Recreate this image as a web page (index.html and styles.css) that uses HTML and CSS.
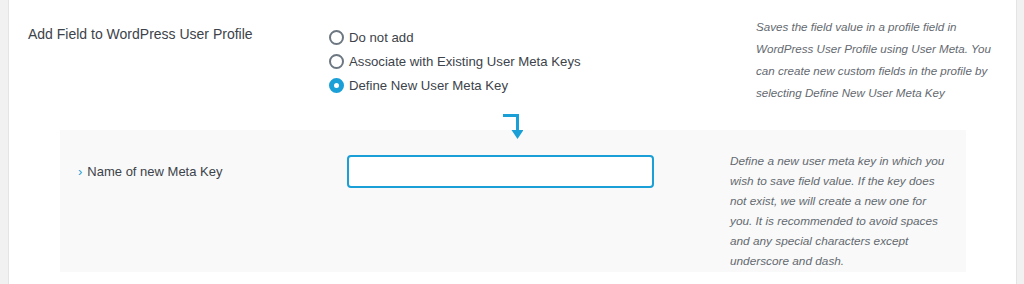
FILE: index.html
```html
<!DOCTYPE html>
<html lang="en">
<head>
  <meta charset="UTF-8">
  <title>User Profile Field</title>
  <link rel="stylesheet" href="styles.css">
</head>
<body>
  <div class="wrap">
    <div class="row">
      <div class="label">Add Field to WordPress User Profile</div>
      <div class="choices">
        <label class="radio"><span class="dot"></span>Do not add</label>
        <label class="radio"><span class="dot"></span>Associate with Existing User Meta Keys</label>
        <label class="radio"><span class="dot checked"></span>Define New User Meta Key</label>
      </div>
      <p class="desc">Saves the field value in a profile field in WordPress User Profile using User Meta. You can create new custom fields in the profile by selecting Define New User Meta Key</p>
    </div>

    <div class="arrow">
      <svg width="20" height="27" viewBox="0 0 20 27">
        <path d="M0 2.5H14.5V19" fill="none" stroke="#1a9fd6" stroke-width="3"/>
        <path d="M8.5 17H20.5L14.5 26Z" fill="#1a9fd6"/>
      </svg>
    </div>

    <div class="sub">
      <div class="sub-label"><span class="chev">›</span>Name of new Meta Key</div>
      <div class="sub-input"><input type="text" class="field"></div>
      <p class="sub-desc">Define a new user meta key in which you wish to save field value. If the key does not exist, we will create a new one for you. It is recommended to avoid spaces and any special characters except underscore and dash.</p>
    </div>
  </div>
</body>
</html>
```

FILE: styles.css
```css
html, body {
  height: 100%;
}
body {
  margin: 0;
  background: #f1f1f1;
  font-family: "Liberation Sans", Arial, sans-serif;
  color: #3c434a;
}
.wrap {
  margin: 0 7px 0 8px;
  min-height: 100%;
  background: #fff;
  border-left: 1px solid #e2e4e7;
  border-right: 1px solid #e2e4e7;
  box-sizing: border-box;
}
.row {
  display: grid;
  grid-template-columns: 301px 427px 1fr;
  align-items: start;
  height: 104px;
  padding-left: 19px;
}
.label {
  font-size: 14px;
  line-height: 20px;
  margin-top: 24px;
}
.choices {
  margin-top: 25px;
}
.radio {
  display: flex;
  align-items: center;
  height: 24px;
  font-size: 13.2px;
}
.dot {
  width: 11px;
  height: 11px;
  border: 2px solid #6c7781;
  border-radius: 50%;
  margin-right: 5px;
  box-sizing: content-box;
}
.dot.checked {
  width: 5px;
  height: 5px;
  border: 5px solid #1a9fd6;
  background: #fff;
}
.desc {
  margin: 16px 0 0 0;
  max-width: 256px;
  font-size: 11.6px;
  line-height: 22px;
  font-style: italic;
  color: #646970;
}
.arrow {
  margin: 9px 0 -10px 494px;
  height: 27px;
  position: relative;
  z-index: 1;
}
.arrow svg {
  display: block;
}
.sub {
  display: grid;
  grid-template-columns: 269px 383px 1fr;
  align-items: start;
  margin: 0 50px 0 51px;
  padding-left: 18px;
  background: #f9f9f9;
  height: 142px;
  box-sizing: border-box;
}
.sub-label {
  font-size: 13px;
  margin-top: 32px;
  line-height: 20px;
}
.chev {
  color: #1a9fd6;
  margin-right: 5px;
}
.sub-input {
  margin-top: 25px;
}
.field {
  display: block;
  width: 307px;
  height: 33px;
  border: 2px solid #1a9fd6;
  border-radius: 4px;
  box-sizing: border-box;
  background: #fff;
  outline: none;
}
.sub-desc {
  margin: 21px 0 0 0;
  max-width: 218px;
  font-size: 11.8px;
  line-height: 20px;
  font-style: italic;
  color: #646970;
}
```
